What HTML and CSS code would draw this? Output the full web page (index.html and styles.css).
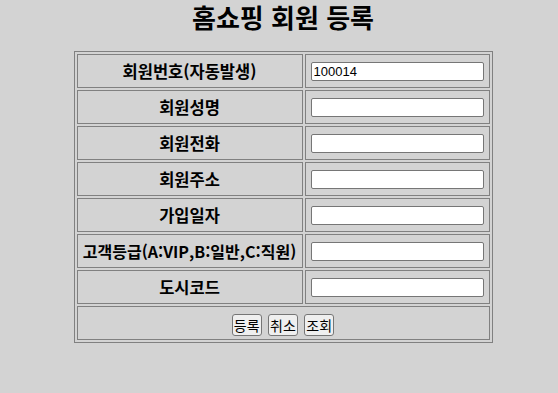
FILE: index.html
```html
<!DOCTYPE html>
<html lang="ko">
<head>
    <meta charset="UTF-8">
    <title>홈쇼핑 회원 등록</title>
    <link rel="stylesheet" href="styles.css">
</head>
<body>
    <h2 class="title">홈쇼핑 회원 등록</h2>
    <form class="join-form">
        <table class="join-table">
            <tr>
                <th>회원번호(자동발생)</th>
                <td><input type="text" name="custno" value="100014"></td>
            </tr>
            <tr>
                <th>회원성명</th>
                <td><input type="text" name="custname"></td>
            </tr>
            <tr>
                <th>회원전화</th>
                <td><input type="text" name="phone"></td>
            </tr>
            <tr>
                <th>회원주소</th>
                <td><input type="text" name="address"></td>
            </tr>
            <tr>
                <th>가입일자</th>
                <td><input type="text" name="joindate"></td>
            </tr>
            <tr>
                <th class="grade">고객등급(A:VIP,B:일반,C:직원)</th>
                <td><input type="text" name="grade"></td>
            </tr>
            <tr>
                <th>도시코드</th>
                <td><input type="text" name="city"></td>
            </tr>
            <tr>
                <td colspan="2" class="actions">
                    <button type="submit">등록</button>
                    <button type="reset">취소</button>
                    <button type="button">조회</button>
                </td>
            </tr>
        </table>
    </form>
</body>
</html>
```

FILE: styles.css
```css
/* 전체 */
body {
    margin: 0 0 0 8px;
    background-color: #d3d3d3;
    color: #000;
    font-family: "Noto Sans CJK KR", "Noto Sans", sans-serif;
}

.title {
    margin: 0;
    padding-top: 1px;
    line-height: 31px;
    font-size: 26px;
    font-weight: bold;
    text-align: center;
}

.join-form {
    margin-top: 19px;
}

/* 입력 테이블 */
.join-table {
    width: 419px;
    margin: 0 auto;
    border: 1px solid #808080;
    border-spacing: 2px;
    table-layout: fixed;
}

.join-table th,
.join-table td {
    height: 32px;
    padding: 0 5px;
    border: 1px solid #808080;
}

.join-table th {
    width: 224px;
    padding: 0;
    font-size: 16.5px;
    font-weight: bold;
    text-align: center;
    white-space: nowrap;
}

.join-table th.grade {
    font-size: 16px;
}

.join-table input {
    display: block;
    box-sizing: border-box;
    width: 100%;
    height: 19px;
    margin: 0;
    padding: 0 2px;
    border: 1px solid #767676;
    border-radius: 2px;
    background: #fff;
    font-family: "Liberation Sans", Arial, sans-serif;
    font-size: 13px;
}

.join-table .actions {
    text-align: center;
}

.actions button {
    height: 22px;
    margin: 0 1px;
    padding: 0 1px;
    border: 1px solid #767676;
    border-radius: 3px;
    background-color: #efefef;
    font-family: "Noto Sans CJK KR", sans-serif;
    font-size: 14px;
    line-height: 18px;
    vertical-align: middle;
}
```
